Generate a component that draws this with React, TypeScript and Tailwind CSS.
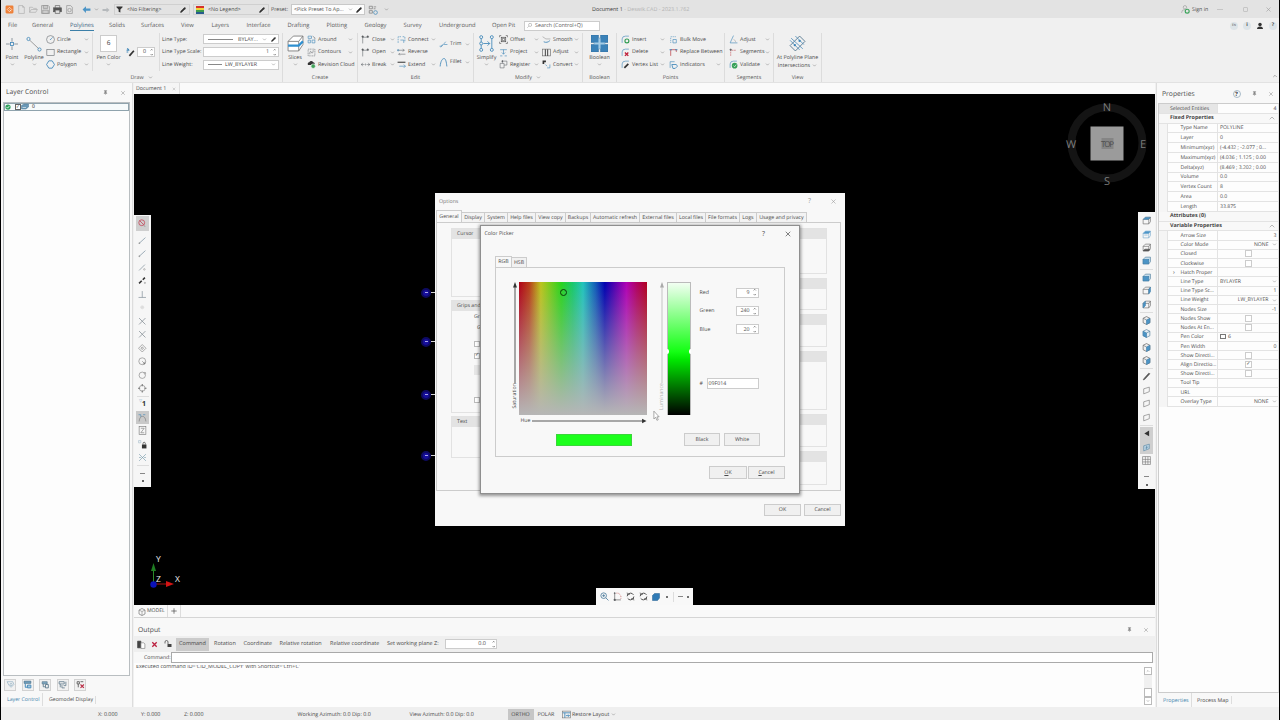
import type { ReactNode } from 'react'
import { ChevronDown, ChevronUp, Pencil, X, Pin, Plus } from 'lucide-react'

const BLUE = '#3f86b8'
const GREY = '#6b7075'

// Every small drawing lives on a 16x16 grid
const icons: Record<string, ReactNode> = {
  logo: <><rect x="1" y="1" width="14" height="14" rx="2" fill="#ee8038" stroke="none" /><path d="M8 4l4 4-4 4-4-4zM8 8l3 3" stroke="#fff" /></>,
  newFile: <><path d="M3 1h7l3 3v11H3zM10 1v3h3" stroke="#aaa" /></>,
  open: <><path d="M1 13V4h5l2 2h5v2M1 13l3-5h11l-3 5z" stroke="#aaa" /></>,
  save: <><path d="M1 1h12l2 2v12H1z" stroke="#888" /><path d="M4 1h8v5H4zM3 9h10v6H3z" fill="#ccc" stroke="#888" /></>,
  print: <><path d="M4 5V1h8v4" stroke="#555" /><rect x="1" y="5" width="14" height="7" fill="#555" stroke="#555" /><path d="M4 9h8v6H4z" fill="#ddd" stroke="#555" /></>,
  preview: <><path d="M3 1h7l3 3v11H3z" stroke="#888" /><circle cx="8" cy="9" r="3" stroke="#888" /></>,
  undo: <path d="M1 8l6-6v4h8v4H7v4z" fill="#4b94c6" stroke="none" />,
  redo: <path d="M15 8L9 3v3H1v4h8v3z" fill="#b5b9bc" stroke="none" />,
  funnel: <path d="M1 1h14v2l-5 5v7l-4-2V8L1 3z" fill="#333" stroke="none" />,
  legend: <><rect width="16" height="4" fill="#d6322c" stroke="none" /><rect y="4" width="16" height="4" fill="#f0d43a" stroke="none" /><rect y="8" width="16" height="4" fill="#3e9c4d" stroke="none" /><rect y="12" width="16" height="4" fill="#285c8e" stroke="none" /></>,
  preset: <><path d="M2 2h5v4H2zM2 9h5v4H2zM9 3h4M9 6h3" stroke="#777" /><circle cx="12" cy="12" r="3" stroke={BLUE} /></>,
  point: <><path d="M8 0v5M8 11v5M0 8h5M11 8h5" stroke="#7a8690" /><rect x="6" y="6" width="4" height="4" stroke={BLUE} /></>,
  polyline: <><path d="M3.5 4L12.5 12.5" stroke="#888" strokeWidth=".8" /><circle cx="2.5" cy="3" r="1.6" stroke={BLUE} strokeWidth=".8" /><circle cx="13.5" cy="13.5" r="1.6" stroke={BLUE} strokeWidth=".8" /></>,
  circle: <><circle cx="8" cy="8" r="7" /><path d="M8 8l4-4M7 8h2" stroke={BLUE} /></>,
  rect: <rect x="1.5" y="2.5" width="13" height="11" />,
  polygon: <path d="M5 1.5h6l4 6.5-4 6.5H5L1 8z" stroke={BLUE} strokeWidth="1.5" />,
  penWidth: <><path d="M1 4h5M1 7h3M2 1l3 2" stroke={BLUE} strokeWidth="2" /><path d="M6 14l8-9" stroke="#333" strokeWidth="3" /></>,
  slices: <><path d="M1 6l5-5h9v8l-4 6H1z" fill="#fff" stroke="#777" strokeWidth=".8" /><path d="M1 6h10v9M11 6l4-5" stroke="#777" strokeWidth=".8" /><path d="M1 10h10l4-4" stroke="#2e8fd0" strokeWidth="2" /></>,
  around: <><path d="M2 2h6v4H2zM2 9h4v5H2zM9 9h5v5H9z" stroke={BLUE} /><path d="M10 2l4 3v3" /></>,
  contours: <><path d="M2 2h12v12H2z" strokeDasharray="2 1" /><path d="M5 11c0-6 2-6 3-3s3 0 3-4" /></>,
  cloud: <><path d="M2 9a3 3 0 012-5 4 4 0 017 0 3 3 0 012 5z" fill="#333" stroke="none" /><circle cx="11" cy="11" r="4" fill="#43a35b" stroke="#fff" /></>,
  close: <><path d="M3 15V4h8" /><circle cx="3" cy="3" r="1.5" fill="#555" /><circle cx="12" cy="3" r="1.5" fill="#555" /></>,
  break: <><path d="M0 8h5M11 8h5M3 5L1 8l2 3M13 5l2 3-2 3" /><circle cx="8" cy="8" r="1" /></>,
  connect: <><path d="M2 14V3h5M10 3h4v8" strokeDasharray="3 1.5" stroke={BLUE} /><path d="M6 9h6v5" stroke={BLUE} /></>,
  reverse: <><path d="M1 4h12M10 2l3 2-3 2M3 11h12M5 9l-2 2 2 2" /><circle cx="2" cy="4" r="1.3" stroke={BLUE} /></>,
  extend: <><path d="M1 4h14" stroke="#444" strokeWidth="2" /><path d="M4 11h11M12 8l3 3-3 3" stroke={BLUE} /></>,
  trim: <path d="M1 11h4l7-8M9 8h6M3 13l3-5" stroke={BLUE} />,
  fillet: <path d="M2 15C3 5 6 1 9 1s4 6 5 14" stroke={BLUE} strokeWidth="1.5" />,
  simplify: <><path d="M3 3.500v9M13 3.500v9M5 8h6M9 6l2 2-2 2" stroke={BLUE} strokeWidth=".8" /><circle cx="3" cy="2" r="1.4" stroke={BLUE} strokeWidth=".8" /><circle cx="3" cy="8" r="1.4" fill="#f0f0f0" stroke={BLUE} strokeWidth=".8" /><circle cx="3" cy="14" r="1.4" stroke={BLUE} strokeWidth=".8" /><circle cx="13" cy="2" r="1.4" stroke={BLUE} strokeWidth=".8" /><circle cx="13" cy="14" r="1.4" stroke={BLUE} strokeWidth=".8" /></>,
  offset: <><rect x="4" y="4" width="8" height="8" stroke="#444" /><path d="M1 4V1h3M12 1h3v3M15 12v3h-3M4 15H1v-3M6 6h4v4H6z" stroke="#555" /></>,
  project: <path d="M2 3h12M8 3v8M5 8l3 3 3-3M2 14h4M10 14h4" stroke={BLUE} />,
  register: <><path d="M2 6h7v8H2zM6 6V2h8v7h-5" /><circle cx="6" cy="2" r="1" fill="#333" /></>,
  smooth: <><path d="M1 3l6 4 8 0" stroke="#999" /><path d="M3 12c4 2 8 1 11-2" stroke={BLUE} strokeWidth="1.5" /></>,
  adjustMod: <><rect x="1" y="2" width="14" height="12" stroke="#666" /><path d="M6 2v12M10 2v12" stroke="#555" strokeWidth="2" /></>,
  convert: <><path d="M1 1h6v3H4v3H1z" fill="#333" stroke="none" /><path d="M6 8l3 3M9 14h5V8" stroke={BLUE} /></>,
  boolean: <><path d="M0 0h7v3h2V0h7v7h-3v2h3v7H9v-3H7v3H0V9h3V7H0z" fill="#3b82b8" stroke="#2e6c9c" strokeWidth=".5" /><path d="M7 3h2v4h4v2H9v4H7V9H3V7h4z" fill="#a5cbe4" stroke="none" /></>,
  insert: <><path d="M2 14V7q0-5 6-5h6" stroke={BLUE} /><circle cx="10.500" cy="10.500" r="3.500" stroke="#2f9b50" strokeWidth="2" /></>,
  delete: <><path d="M2 14V7q0-5 6-5h6" stroke={BLUE} /><path d="M7 8l6 6M13 8l-6 6" stroke="#c0223c" strokeWidth="2.500" /></>,
  vertexList: <><path d="M2 14V7q0-5 6-5h6" stroke={BLUE} /><path d="M6 14l7-7" stroke="#333" strokeWidth="3" /></>,
  bulkMove: <><path d="M3 14V5M3 3h9" stroke={BLUE} strokeDasharray="2 1.500" /><path d="M7 8h6v6H7z" stroke={BLUE} /></>,
  replace: <><path d="M3 14V3h10v4" stroke="#c55a60" strokeWidth="1.500" /><path d="M1 3h4M11 3h4" stroke={BLUE} strokeWidth="2" /></>,
  indicators: <><path d="M2 14V3h8" stroke={BLUE} /><path d="M5 8h8l2 3-4 4H7z" stroke={BLUE} strokeWidth="1.500" /></>,
  angle: <><path d="M8 1L2 14h13" stroke={BLUE} /><path d="M8 8q4 1 4 5" stroke="#aaa" /></>,
  segments: <><path d="M3 14V4h9" stroke="#c55a60" strokeDasharray="3 1" /><circle cx="3" cy="3" r="1.400" fill="#555" /></>,
  validate: <><path d="M2 14V7q0-5 6-5h6" stroke={BLUE} /><circle cx="10" cy="10" r="5" fill="#36a058" stroke="none" /><path d="M8 10l2 2 3-4" stroke="#fff" /></>,
  intersect: <><path d="M1 10l9-9 5 5-9 9z" stroke="#4c6f88" strokeWidth=".8" /><path d="M2 3l11 10M1 5l9 9M6 1l8 8" stroke={BLUE} strokeWidth=".7" /><circle cx="5.500" cy="9.500" r="1.100" fill={BLUE} stroke="none" /><circle cx="10" cy="5.500" r="1.100" fill={BLUE} stroke="none" /></>,
  user: <><circle cx="7" cy="4" r="3" stroke="#999" /><path d="M1 14q0-6 6-6" stroke="#999" /><circle cx="11" cy="11" r="3.500" stroke="#3aa35a" strokeWidth="2" /></>,
  person: <><circle cx="8" cy="5" r="3.500" fill="#333" stroke="none" /><path d="M2 14q0-5 6-5t6 5z" fill="#333" stroke="none" /></>,
  cubeTop: <><path d="M2 6l4-4h9l-3 4z" fill="#4b94c6" stroke="#3d6a8a" /><path d="M2 6v8h10V6M12 14l3-4V2" stroke="#666" /></>,
  cubeFlat: <><path d="M2 6l4-4h9l-3 4z" fill="#4b94c6" stroke="#5a9ccc" /><path d="M2 6v8h10V6M12 14l3-4V2M4 9h6" stroke="#76a9cc" /></>,
  cubeBottom: <><path d="M2 6l4-4h9l-3 4zM2 6v8h10V6M12 14l3-4V2" stroke="#666" /><path d="M2 14l3-3h9l-2 3z" fill="#555" stroke="#555" /></>,
  cubeFront: <><path d="M2 6l4-4h9v8l-3 4H2z" stroke="#4b7897" fill="#c5ddec" /><rect x="2" y="6" width="10" height="8" fill="#4b94c6" stroke="#3f7fab" /></>,
  cubeSide: <><path d="M2 6l4-4h9l-3 4zM2 6v8h10V6" stroke="#666" /><path d="M12 6l3-4v8l-3 4z" fill="#4b94c6" stroke="#3f7fab" /></>,
  cubeLeft: <><path d="M2 6l4-4h9v8l-3 4H2zM12 6v8M2 6h10l3-4" stroke="#666" /><path d="M2 6l4-4v8l-4 4z" fill="#4b94c6" stroke="#3f7fab" /></>,
  cubeIso: <><path d="M8 1l6 3v8l-6 3-6-3V4z" stroke="#4b7897" fill="#e6eef3" /><path d="M2 4l6 3v8l-6-3z" fill="#4b94c6" stroke="#3f7fab" /><path d="M8 7l6-3" stroke="#4b7897" /></>,
  cubeIso2: <><path d="M8 1l6 3v8l-6 3-6-3V4z" stroke="#555" fill="#eee" /><path d="M8 7l6-3v8l-6 3z" fill="#4b94c6" stroke="#3f7fab" /><path d="M2 4l6 3" /></>,
  brush: <path d="M2 14l3-1 9-10-2-1-8 9z" fill="#555" stroke="#555" />,
  plane: <path d="M3 5l10-3v8L3 14z" stroke="#777" />,
  arrowLeft: <path d="M14 1v13L3 8z" fill="#333" stroke="none" />,
  planeBlue: <><path d="M3 5l10-3v8L3 14z" fill="#b9d3e4" stroke="#5a86a3" /><path d="M6 9l5-2M8 5v6" stroke="#5a86a3" /></>,
  grid: <path d="M1 1h14v14H1zM6 1v14M10.500 1v14M1 6h14M1 10.500h14" stroke="#777" />,
  none: <><circle cx="7" cy="7" r="5.500" stroke="#c4485a" strokeWidth="1.500" /><path d="M3 3l8 8" stroke="#c4485a" strokeWidth="1.500" /><path d="M12 11v3h2" stroke="#999" /></>,
  seg: <><path d="M2 14L14 3" stroke="#7f95a3" strokeWidth="1.400" /><circle cx="2.500" cy="13.500" r="1" fill="#999" stroke="#999" /></>,
  seg2: <><path d="M2 14L13 3" stroke="#8495a0" strokeWidth="1.400" /><circle cx="12" cy="12" r="1.500" stroke="#999" /></>,
  segBold: <><path d="M2 14l5-5M9 7l4-4" stroke="#333" strokeWidth="3" /><circle cx="13" cy="13" r="1.200" stroke="#888" /></>,
  perp: <path d="M1 14h14M8 2v12" stroke="#8a969e" strokeWidth="1.400" />,
  dotGrey: <circle cx="8" cy="8" r="3" fill="#ddd" stroke="#ddd" />,
  cross: <path d="M2 2l12 12M14 2L2 14" stroke="#828b92" strokeWidth="1.400" />,
  diamond: <><path d="M8 1l7 7-7 7-7-7z" stroke="#777" /><circle cx="8" cy="8" r="2" stroke="#777" /></>,
  tangent: <><circle cx="8" cy="8" r="6.500" stroke="#777" /><path d="M8 8l5 5M13 9v4H9" stroke="#666" /></>,
  ring: <><circle cx="8" cy="8" r="6" stroke="#777" /><circle cx="13" cy="4" r="1.500" fill="#fff" stroke="#777" /></>,
  ringTicks: <><circle cx="8" cy="8" r="5.500" stroke="#777" /><path d="M8 0v4M8 12v4M0 8h4M12 8h4" stroke="#777" strokeWidth="2" /></>,
  arcNode: <><path d="M2 15q1-9 6-9t6 9" stroke="#777" /><path d="M1 3h4v4M9 3h4" stroke={BLUE} /></>,
  zBox: <><rect x="2" y="1" width="12" height="14" stroke="#777" /><path d="M5 4h6l-6 8h6" stroke="#777" /></>,
  lock: <><path d="M1 1h4v4H1z" stroke="#a5bccb" /><rect x="7" y="8" width="8" height="7" fill="#333" stroke="none" /><path d="M9 8V6a2 2 0 014 0v2" stroke="#333" /></>,
  cutCross: <path d="M2 2l12 12M14 2L2 14M2 8h3M11 8h3" stroke="#6e93a6" />,
  zoom: <><circle cx="6.500" cy="6.500" r="5" stroke="#4d7c9c" strokeWidth="1.500" /><path d="M10.500 10.500L15 15M4 6.500h5M6.500 4v5" stroke="#4d7c9c" strokeWidth="1.500" /></>,
  zoomBox: <><path d="M3 14V2M3 14h11" stroke="#555" /><path d="M6 2h4l4 5v5" strokeDasharray="2 1.500" stroke="#c05050" /><circle cx="3" cy="14" r="1.500" fill="#444" /><circle cx="3" cy="2" r="1" fill="#444" /></>,
  orbit: <><circle cx="8" cy="8" r="6" stroke="#444" strokeWidth="1.600" strokeDasharray="15 3.800" /><path d="M2 1l1 4 4-1M14 15l-1-4-4 1" stroke="#444" /></>,
  solidCube: <path d="M1 5l4-4h10v9l-4 5H1z" fill="#2f7ab5" stroke="#2a6594" />,
  paste: <><path d="M1 2h6v12H1z" fill="#444" stroke="#444" /><path d="M7 5h5l2 2v8H7z" fill="#fff" stroke="#777" /></>,
  clear: <path d="M3 3l10 10M13 3L3 13" stroke="#bb1f3f" strokeWidth="3" />,
  unlock: <><rect x="7" y="8" width="8" height="6" fill="#444" stroke="none" /><path d="M2 7V4a3 3 0 016 0v4" stroke="#444" strokeWidth="1.500" /></>,
  restore: <><rect x="1" y="2" width="14" height="12" stroke="#777" /><path d="M1 5h14M5 5v9" stroke={BLUE} strokeWidth="1.500" /><path d="M7 10h6M11 8l2 2-2 2" stroke={BLUE} strokeWidth="1.500" /></>,
  check: <><circle cx="8" cy="8" r="7" fill="#2fa15c" stroke="none" /><path d="M4 8l3 3 5-6" stroke="#fff" strokeWidth="2" /></>,
  layer: <><path d="M1 5l5-3h9v6l-5 4H1z" fill="#6a98b6" stroke="#4f7d9b" /><path d="M3 9h7" stroke="#fff" /></>,
  layerTool: <><path d="M2 2h12v4H2z" fill="#6f9fbe" stroke="#486c84" /><path d="M4 6v7h3M8 9h6v5H8z" fill="#a5c8de" stroke={BLUE} strokeWidth="1.500" /></>,
  layerDel: <><path d="M2 3h4v4H2zM8 3h5M4 7v6" stroke="#555" strokeWidth="1.500" /><path d="M8 8l6 6M14 8l-6 6" stroke="#bb3048" strokeWidth="2" /></>,
  layerWire: <><path d="M2 3h10l2 5-5 5-4-4z" stroke="#86a9be" /><circle cx="9" cy="8" r="2" stroke="#86a9be" /></>,
  layerCopy: <><path d="M2 3h9v4H2z" fill="#7fa9c3" stroke="#55758a" /><path d="M4 7v5h3M8 8h5v6H8z" stroke="#55758a" strokeWidth="1.500" /></>,
  layerNode: <><path d="M2 3h9v4H2zM4 7v6" stroke="#667f8f" strokeWidth="1.500" /><path d="M7 9v5h5M14 3v7h-4" stroke="#667f8f" strokeWidth="1.500" /></>,
  model: <><path d="M8 1l6 3v8l-6 3-6-3V4z" stroke="#555" /><path d="M2 4l6 3 6-3M8 7v8" stroke="#777" /></>,
}

function Icon({ name, className = 'size-[9px]' }: { name: string; className?: string }) {
  return (
    <svg viewBox="0 0 16 16" fill="none" stroke={GREY} strokeWidth="1.1" className={`shrink-0 ${className}`}>
      {icons[name]}
    </svg>
  )
}

function Chev({ className = '' }: { className?: string }) {
  return <ChevronDown className={`size-[5px] shrink-0 text-[#666] ${className}`} />
}

function Spin() {
  return (
    <span className="flex w-[5px] shrink-0 flex-col items-center justify-center gap-[1.500px]">
      <ChevronUp className="size-[3.500px] text-[#444]" strokeWidth={4} />
      <ChevronDown className="size-[3.500px] text-[#444]" strokeWidth={4} />
    </span>
  )
}

/* ---------- Title bar ---------- */

function TitleBar() {
  return (
    <div className="flex h-[18px] shrink-0 items-center bg-[#e3e3e3] pt-px text-[5.300px] whitespace-nowrap text-[#4a4a4a]">
      <div className="flex w-[79px] items-center gap-[3px] pl-[4px]">
        <Icon name="logo" />
        <Icon name="newFile" />
        <Icon name="open" />
        <Icon name="save" />
        <Icon name="print" />
        <Icon name="preview" />
      </div>
      <div className="flex w-[34px] items-center pl-[2px]">
        <Icon name="undo" />
        <Chev className="mx-[3px]" />
        <Icon name="redo" className="size-[8px]" />
      </div>
      <div className="flex h-[11px] w-[76px] items-center border border-[#d0d0d0] px-[1px]">
        <Icon name="funnel" className="size-[7px]" />
        <span className="ml-[4px] flex-1">&lt;No Filtering&gt;</span>
        <Pencil className="mr-[2px] size-[6px] fill-[#333] text-[#333]" />
      </div>
      <div className="ml-[3px] flex h-[11px] w-[76px] items-center border border-[#d0d0d0] px-[2px]">
        <Icon name="legend" className="size-[8px]" />
        <span className="ml-[4px] flex-1">&lt;No Legend&gt;</span>
        <Pencil className="mr-[1px] size-[6px] fill-[#333] text-[#333]" />
      </div>
      <span className="ml-[2px] w-[20px]">Preset:</span>
      <div className="flex h-[11px] w-[74px] items-center border border-[#c8c8c8] bg-[#fcfcfc] px-[2px]">
        <span className="flex-1">&lt;Pick Preset To Ap...</span>
        <Chev />
        <Pencil className="ml-[3px] size-[6px] fill-[#333] text-[#333]" />
      </div>
      <Icon name="preset" className="ml-[3px] size-[10px]" />
      <Chev className="ml-[6px]" />
      <div className="ml-[203px] text-[5.400px] whitespace-pre text-[#3a3a3a]">
        Document 1 <span className="text-[#b4b4b4]">- Deswik.CAD - 2023.1.762</span>
      </div>
      <div className="ml-auto flex items-center text-[5.300px]">
        <Icon name="user" />
        <span className="ml-[2px] w-[25px]">Sign in</span>
        <span className="h-px w-[6px] bg-[#c5c5c5]" />
        <span className="ml-[20px] size-[5px] rounded-[1px] border border-[#c5c5c5]" />
        <X className="mr-[7px] ml-[17px] size-[7px] text-[#999]" />
      </div>
    </div>
  )
}

/* ---------- Ribbon ---------- */

function RibbonTabs() {
  return (
    <div className="flex h-[15px] shrink-0 items-center pt-px text-[5.800px] whitespace-nowrap text-[#5a5a5a]">
      <span className="w-[31px] pl-[7px]">File</span>
      <span className="w-[38px]">General</span>
      <span className="w-[39px]">
        <span className="border-b border-[#3b7fa8] pb-px text-[#3c6480]">Polylines</span>
      </span>
      <span className="w-[32px]">Solids</span>
      <span className="w-[40px]">Surfaces</span>
      <span className="w-[30.500px]">View</span>
      <span className="w-[35px]">Layers</span>
      <span className="w-[41px]">Interface</span>
      <span className="w-[39px]">Drafting</span>
      <span className="w-[38px]">Plotting</span>
      <span className="w-[39px]">Geology</span>
      <span className="w-[35.500px]">Survey</span>
      <span className="w-[53px]">Underground</span>
      <span className="w-[32px]">Open Pit</span>
      <span className="-mt-px flex h-[10px] w-[76px] items-center border border-[#ccc] bg-white pl-[2px] text-[5.400px]">
        <svg viewBox="0 0 16 16" fill="none" stroke="#888" strokeWidth="1.500" className="mr-[3px] size-[5px]">
          <circle cx="10" cy="6" r="5" />
          <path d="M6 10l-5 5" />
        </svg>
        Search (Control+Q)
      </span>
      <span className="-mt-px mr-[2px] ml-auto flex items-center gap-[5px] text-[5px] text-[#444]">
        <span className="flex size-[8px] items-center justify-center rounded-full bg-[#dde4e8] text-[3px]">EN</span>
        <span className="flex size-[8px] items-center justify-center rounded-full bg-[#dde4e8] font-bold">i</span>
        <Icon name="person" className="size-[8px]" />
        <span className="flex size-[8px] items-center justify-center rounded-full bg-[#dde4e8] font-bold">?</span>
      </span>
    </div>
  )
}

function Group({ label, more, className, children }: { label: string; more?: boolean; className: string; children: ReactNode }) {
  return (
    <div className={`flex shrink-0 flex-col border-r border-[#dcdcdc] ${className}`}>
      <div className="flex h-[38px]">{children}</div>
      <div className="flex h-[11px] items-center justify-center gap-[4px] pt-[2px] text-[#5a5a5a]">
        {label}
        {more && <Chev />}
      </div>
    </div>
  )
}

function Big({ icon, label, className, size = 'size-[14px]' }: { icon: string; label: string; className: string; size?: string }) {
  return (
    <div className={`flex shrink-0 flex-col items-center ${className}`}>
      <span className="flex h-[21px] items-center">
        <Icon name={icon} className={size} />
      </span>
      <span className="flex h-[8px] items-center whitespace-nowrap">{label}</span>
      <Chev />
    </div>
  )
}

function Stack({ items, className }: { items: [string, string, boolean?][]; className: string }) {
  return (
    <div className={`flex shrink-0 flex-col ${className}`}>
      {items.map(([icon, label, chev]) => (
        <div key={label} className="flex flex-1 items-center">
          <Icon name={icon} />
          <span className="ml-[2px] flex-1 whitespace-nowrap">{label}</span>
          {chev && <Chev />}
        </div>
      ))}
    </div>
  )
}

function Ribbon() {
  return (
    <div className="flex h-[50px] shrink-0 border-b border-[#e2e2e2] text-[5.350px] text-[#4a4a4a]">
      <Group label="Draw" more className="w-[282px]">
        <Big icon="point" label="Point" className="w-[22px]" size="size-[12px]" />
        <Big icon="polyline" label="Polyline" className="w-[22px]" size="size-[16px]" />
        <Stack
          className="w-[48px] border-r border-[#dcdcdc] pr-[3px] pl-px"
          items={[['circle', 'Circle', true], ['rect', 'Rectangle', true], ['polygon', 'Polygon', true]]}
        />
        <div className="flex w-[31px] flex-col items-center">
          <span className="mt-[2px] flex h-[17px] w-[17px] items-center justify-center border border-[#ccc] bg-white text-[6.500px] text-[#333]">6</span>
          <span className="mt-[2px] flex h-[8px] items-center">Pen Color</span>
          <Chev />
        </div>
        <div className="flex w-[36px] items-center border-r border-[#dcdcdc]">
          <Icon name="penWidth" className="ml-[2px] size-[9px]" />
          <span className="ml-[2px] flex h-[10px] w-[18px] shrink-0 items-center justify-end border border-[#ccc] bg-white">
            <span className="mr-[3px]">0</span>
            <Spin />
          </span>
        </div>
        <div className="grid w-[43px] grid-rows-3 items-center pl-[2px] whitespace-nowrap">
          <span>Line Type:</span>
          <span>Line Type Scale:</span>
          <span>Line Weight:</span>
        </div>
        <div className="grid w-[76px] grid-rows-3 items-center">
          <span className="flex h-[10px] items-center border border-[#ccc] bg-white px-[2px]">
            <span className="ml-[2px] h-px w-[25px] bg-[#888]" />
            <span className="ml-[5px] flex-1">BYLAY...</span>
            <Chev />
            <Pencil className="ml-[4px] size-[5px] fill-[#333] text-[#333]" />
          </span>
          <span className="flex h-[10px] items-center justify-end border border-[#ccc] bg-white pr-[1px]">
            <span className="mr-[3px]">1</span>
            <Spin />
          </span>
          <span className="flex h-[10px] items-center border border-[#ccc] bg-white px-[2px]">
            <span className="ml-[2px] h-px w-[14px] bg-[#888]" />
            <span className="ml-[3px] flex-1">LW_BYLAYER</span>
            <Chev />
          </span>
        </div>
      </Group>
      <Group label="Create" className="w-[75px]">
        <Big icon="slices" label="Slices" className="w-[24px]" size="size-[17px]" />
        <Stack className="w-[46px]" items={[['around', 'Around', true], ['contours', 'Contours', true], ['cloud', 'Revision Cloud']]} />
      </Group>
      <Group label="Edit" className="w-[116px]">
        <Stack className="ml-[3px] w-[34px]" items={[['close', 'Close', true], ['close', 'Open', true], ['break', 'Break', true]]} />
        <Stack className="ml-[2px] w-[39px]" items={[['connect', 'Connect', true], ['reverse', 'Reverse'], ['extend', 'Extend', true]]} />
        <Stack className="ml-[3px] w-[31px] pt-[2px]" items={[['trim', 'Trim', true], ['fillet', 'Fillet', true]]} />
      </Group>
      <Group label="Modify" more className="w-[109px]">
        <Big icon="simplify" label="Simplify" className="w-[25px]" size="size-[17px]" />
        <Stack className="w-[40px]" items={[['offset', 'Offset', true], ['project', 'Project', true], ['register', 'Register', true]]} />
        <Stack className="ml-[3px] w-[37px]" items={[['smooth', 'Smooth', true], ['adjustMod', 'Adjust', true], ['convert', 'Convert', true]]} />
      </Group>
      <Group label="Boolean" className="w-[34px]">
        <Big icon="boolean" label="Boolean" className="w-[33px]" size="size-[17px]" />
      </Group>
      <Group label="Points" className="w-[108px]">
        <Stack className="ml-[4px] w-[44px]" items={[['insert', 'Insert', true], ['delete', 'Delete', true], ['vertexList', 'Vertex List', true]]} />
        <Stack className="ml-[4px] w-[52px]" items={[['bulkMove', 'Bulk Move'], ['replace', 'Replace Between'], ['indicators', 'Indicators', true]]} />
      </Group>
      <Group label="Segments" className="w-[49px]">
        <Stack className="ml-[4px] w-[41px]" items={[['angle', 'Adjust', true], ['segments', 'Segments', true], ['validate', 'Validate', true]]} />
      </Group>
      <Group label="View" className="w-[48px]">
        <div className="flex w-[47px] flex-col items-center whitespace-nowrap">
          <span className="flex h-[21px] items-center">
            <Icon name="intersect" className="size-[17px]" />
          </span>
          <span className="flex h-[8px] items-center">At Polyline Plane</span>
          <span className="flex h-[7px] items-center gap-[2px]">
            Intersections <Chev />
          </span>
        </div>
      </Group>
      <ChevronUp className="mt-auto mr-[1px] mb-[3px] ml-auto size-[6px] text-[#666]" />
    </div>
  )
}

/* ---------- Left dock ---------- */

function LayerDock() {
  return (
    <div className="flex w-[132px] shrink-0 flex-col border-r border-[#ddd] bg-[#f8f8f8]">
      <div className="flex h-[19px] shrink-0 items-center pr-[6.500px] pl-[5px] text-[6.750px] text-[#4a4a4a]">
        <span className="flex-1">Layer Control</span>
        <Pin className="mr-[11.500px] size-[5px] fill-[#888] text-[#888]" />
        <X className="size-[6px] text-[#888]" />
      </div>
      <div className="mr-[2px] ml-[2px] h-[574px] shrink-0 border border-[#b9bec1] bg-[#fdfdfd]">
        <div className="flex h-[8px] items-center border border-[#8fa3ad] bg-[#f6fafb] text-[5px]">
          <Icon name="check" className="size-[6px]" />
          <span className="ml-[4px] flex size-[6px] items-center justify-center border border-[#666] bg-white text-[4.500px]">✓</span>
          <Icon name="layer" className="size-[8px]" />
          <span className="ml-[3px] text-[#222]">0</span>
        </div>
      </div>
      <div className="flex h-[17px] shrink-0 items-center gap-[5.500px] pl-[3px]">
        {['layerWire', 'layerTool', 'layerCopy', 'layerNode', 'layerDel'].map((name) => (
          <span key={name} className="flex h-[12px] w-[12px] items-center justify-center border border-[#d2d2d2] bg-[#f1f1f1]">
            <Icon name={name} />
          </span>
        ))}
      </div>
      <div className="flex h-[13px] items-center text-[5.200px] whitespace-nowrap text-[#4a4a4a]">
        <span className="flex h-full w-[42px] items-center border-r border-[#ddd] pt-px pl-[6px] text-[#4384ad]">Layer Control</span>
        <span className="flex h-[8px] w-[53px] items-center border-r border-[#ddd] pt-px pl-[6px]">Geomodel Display</span>
      </div>
    </div>
  )
}

/* ---------- Canvas ---------- */

const snapTools: [string, string][] = [
  ['none', 'h-[15px] bg-[#cfcfcf]'],
  ['seg', 'h-[15.500px] pt-[2px]'],
  ['seg', 'h-[13.500px]'],
  ['seg2', 'h-[13.500px]'],
  ['segBold', 'h-[13.500px]'],
  ['perp', 'h-[13.500px]'],
  ['dotGrey', 'h-[13.500px]'],
  ['cross', 'h-[13.500px]'],
  ['cross', 'h-[13.500px]'],
  ['diamond', 'h-[13.500px]'],
  ['tangent', 'h-[13.500px]'],
  ['ring', 'h-[13.500px]'],
  ['ringTicks', 'h-[13.500px]'],
]

function SnapToolbar() {
  return (
    <div className="absolute top-[121px] left-0 flex h-[272px] w-[17px] flex-col items-center bg-[#f6f6f6] pt-px">
      {snapTools.map(([name, cls], i) => (
        <span key={i} className={`flex w-[13px] shrink-0 items-center justify-center ${cls}`}>
          <Icon name={name} className="size-[8.500px]" />
        </span>
      ))}
      <span className="mt-px flex h-[15px] w-[12px] shrink-0 items-center justify-center border-t border-[#ddd] text-[7px] font-bold text-[#333]">
        <span className="-mt-[5px] text-[4px] font-normal text-[#6fa3c4]">▽</span>1
      </span>
      <span className="flex h-[13px] w-[13px] shrink-0 items-center justify-center bg-[#c9c9c9]"><Icon name="arcNode" /></span>
      <span className="flex h-[13.500px] shrink-0 items-center"><Icon name="zBox" /></span>
      <span className="flex h-[13px] shrink-0 items-center"><Icon name="lock" /></span>
      <span className="flex h-[13.500px] shrink-0 items-center"><Icon name="cutCross" /></span>
      <span className="mt-px h-[8px] w-[12px] shrink-0 border-t border-[#ddd]" />
      <span className="h-px w-[5px] shrink-0 bg-[#888]" />
      <span className="mt-[6px] size-[2px] shrink-0 rounded-full bg-[#333]" />
    </div>
  )
}

function ViewToolbar() {
  const groups = [
    ['cubeTop', 'cubeFlat', 'cubeBottom', 'cubeFront'],
    ['cubeFront', 'cubeSide', 'cubeLeft'],
    ['cubeIso2', 'cubeIso', 'cubeIso2', 'cubeIso2'],
    ['brush', 'plane', 'plane', 'plane'],
  ]
  return (
    <div className="absolute top-[118px] right-0 flex h-[277px] w-[17px] flex-col items-center bg-[#f6f6f6] pt-[2px]">
      {groups.map((names, g) => (
        <div key={g} className="mb-px flex w-[13px] shrink-0 flex-col items-center border-b border-[#ddd] pb-px">
          {names.map((name, i) => (
            <span key={i} className="flex h-[13.400px] items-center">
              <Icon name={name} />
            </span>
          ))}
        </div>
      ))}
      <span className="flex h-[13.500px] w-[13px] shrink-0 items-center justify-center bg-[#cfcfcf]"><Icon name="arrowLeft" className="size-[7px]" /></span>
      <span className="flex h-[13.500px] w-[13px] shrink-0 items-center justify-center bg-[#cfcfcf]"><Icon name="planeBlue" /></span>
      <span className="flex h-[14px] shrink-0 items-center"><Icon name="grid" /></span>
      <span className="mt-[8px] h-px w-[5px] shrink-0 bg-[#888]" />
      <span className="mt-[7px] size-[2px] shrink-0 rounded-full bg-[#333]" />
    </div>
  )
}

function NavToolbar() {
  return (
    <div className="absolute bottom-0 left-[462px] flex h-[17px] w-[97px] items-center bg-[#f8f8f8] pl-[3.500px]">
      <div className="flex items-center gap-[4px]">
        <Icon name="zoom" />
        <Icon name="zoomBox" />
        <Icon name="orbit" />
        <Icon name="orbit" />
        <Icon name="solidCube" className="size-[8px]" />
      </div>
      <span className="ml-[6px] size-[2px] rounded-full bg-[#444]" />
      <span className="ml-[5px] h-[10px] w-px bg-[#ddd]" />
      <span className="ml-[4px] h-px w-[5px] bg-[#888]" />
      <span className="ml-[4px] size-[2px] rounded-full bg-[#444]" />
    </div>
  )
}

function Compass() {
  return (
    <div className="absolute top-[4px] right-[3px] size-[90px]">
      <svg viewBox="0 0 90 90" className="size-full" fontFamily="Open Sans, sans-serif" fontSize="11" fill="#7d7d7d" textAnchor="middle">
        <circle cx="45" cy="45" r="35.500" fill="none" stroke="#141414" strokeWidth="8" />
        <rect x="28.500" y="28.500" width="33" height="34" fill="#9b9b9b" />
        <rect x="39.500" y="40" width="12" height="11" fill="#858585" />
        <text x="45.500" y="49" fontSize="8" fill="#4c4c4c" textLength="13">TOP</text>
        <text x="45" y="13">N</text>
        <text x="81" y="50">E</text>
        <text x="45" y="87">S</text>
        <text x="9" y="50">W</text>
      </svg>
    </div>
  )
}

function Axes() {
  return (
    <svg viewBox="0 0 40 40" className="absolute bottom-[13px] left-[11px] size-[40px]" fontFamily="Open Sans, sans-serif" fontSize="8.500" fill="#eee">
      <path d="M8.500 32V16" stroke="#2a8a2a" />
      <path d="M6 19l2.500-8L11 19z" fill="#1f7d22" />
      <path d="M9 32h13" stroke="#a11" />
      <path d="M21 29l8 3-8 3z" fill="#d41414" />
      <circle cx="8.500" cy="32.500" r="3.200" fill="#0a12b8" />
      <text x="11" y="10">Y</text>
      <text x="11" y="30">Z</text>
      <text x="30" y="30">X</text>
    </svg>
  )
}

const vertexMarks = ['top-[193px]', 'top-[242px]', 'top-[295px]', 'top-[356px]']

function Canvas() {
  return (
    <div className="relative h-[511px] shrink-0 bg-black">
      {vertexMarks.map((top) => (
        <div key={top} className={`absolute left-[287px] flex h-[11px] items-center ${top}`}>
          <span className="flex size-[10px] items-center justify-center rounded-full border-2 border-[#0d0a60] bg-[#170f9c]">
            <span className="h-px w-[3px] bg-[#a9a8e8]" />
          </span>
          <span className="h-px w-[5px] bg-[#d5d5d5]" />
        </div>
      ))}
      <Compass />
      <Axes />
      <SnapToolbar />
      <ViewToolbar />
      <NavToolbar />
      <OptionsDialog />
      <ColorPicker />
    </div>
  )
}

/* ---------- Dialogs ---------- */

const optionTabs: [string, string][] = [
  ['Display', 'w-[23px]'],
  ['System', 'w-[23px]'],
  ['Help files', 'w-[28px]'],
  ['View copy', 'w-[30px]'],
  ['Backups', 'w-[25px]'],
  ['Automatic refresh', 'w-[49px]'],
  ['External files', 'w-[37px]'],
  ['Local files', 'w-[29px]'],
  ['File formats', 'w-[34px]'],
  ['Logs', 'w-[17px]'],
  ['Usage and privacy', 'w-[50px]'],
]

function Section({ title, className, children }: { title?: string; className: string; children?: ReactNode }) {
  return (
    <div className={`shrink-0 border border-[#e2e2e2] ${className}`}>
      <div className="flex h-[10px] items-center bg-[#e3e3e3] pl-[5px]">{title}</div>
      {children}
    </div>
  )
}

function OptionsDialog() {
  return (
    <div className="absolute top-[99px] left-[301px] flex h-[333px] w-[410px] flex-col bg-[#f8f8f8] text-[5.250px] text-[#4a4a4a]">
      <div className="flex h-[17px] shrink-0 items-center pr-[8px] pl-[4px] text-[#777]">
        <span className="flex-1">Options</span>
        <span className="mr-[19px] text-[7px] text-[#999]">?</span>
        <X className="size-[7px] text-[#999]" />
      </div>
      <div className="ml-[1px] flex h-[12px] shrink-0 items-end whitespace-nowrap">
        <span className="flex h-[12px] w-[26px] items-center justify-center border border-b-0 border-[#ccc]">General</span>
        {optionTabs.map(([label, w]) => (
          <span key={label} className={`flex h-[10px] items-center justify-center border-t border-r border-[#ccc] bg-[#f3f3f3] ${w}`}>
            {label}
          </span>
        ))}
      </div>
      <div className="mr-[4px] ml-[1px] flex h-[269px] shrink-0 justify-between border border-[#ccc] pt-[5px] pr-[13px] pl-[14px]">
        <div className="flex w-[180px] flex-col gap-[3px]">
          <Section title="Cursor" className="h-[69px]" />
          <Section title="Grips and selection" className="h-[113px]">
            <div className="flex flex-col items-start pl-[22px]">
              <span className="mt-[3px]">Grip size</span>
              <span className="mt-[6px] ml-[3px]">Grip color</span>
              <span className="mt-[10px] size-[6px] border border-[#bbb] bg-white" />
              <span className="mt-[6px] flex size-[6px] items-center justify-center border border-[#bbb] bg-white text-[5px]">✓</span>
              <span className="mt-[6px] h-[10px] w-[20px] bg-[#e6e6e6]" />
              <span className="mt-[22px] size-[6px] border border-[#bbb] bg-white" />
            </div>
          </Section>
          <Section title="Text" className="h-[42px]" />
        </div>
        <div className="flex w-[180px] flex-col gap-[4px]">
          <Section className="h-[46px]" />
          <Section className="h-[32px]" />
          <Section className="h-[33px]" />
          <Section className="h-[59px]" />
          <Section className="h-[33px]" />
          <Section className="h-[34px]" />
        </div>
      </div>
      <div className="mt-[13px] mr-[4px] flex justify-end gap-[3px]">
        <span className="flex h-[12px] w-[37px] items-center justify-center border border-[#ccc] bg-[#f0f0f0]">OK</span>
        <span className="flex h-[12px] w-[37px] items-center justify-center border border-[#ccc] bg-[#f0f0f0]">Cancel</span>
      </div>
    </div>
  )
}

function Channel({ label, value }: { label: string; value: number }) {
  return (
    <div className="flex h-[18.400px] items-center">
      <span className="w-[36px]">{label}</span>
      <span className="flex h-[10px] w-[23px] items-center justify-end border border-[#ccc] bg-white">
        <span className="mr-[3px]">{value}</span>
        <Spin />
      </span>
    </div>
  )
}

function ColorPicker() {
  return (
    <div className="absolute top-[131px] left-[346px] flex h-[269px] w-[320px] flex-col border border-[#8f8f8f] bg-[#f8f8f8] text-[5.250px] text-[#4a4a4a] shadow-[0_1px_3px_1px_rgba(0,0,0,0.4)]">
      <div className="flex h-[16px] shrink-0 items-center pr-[7px] pl-[3.500px]">
        <span className="flex-1">Color Picker</span>
        <span className="mr-[19px] text-[7px]">?</span>
        <X className="size-[8px] text-[#444]" />
      </div>
      <div className="mt-[14px] ml-[14px] flex h-[11px] items-end">
        <span className="flex h-[11px] w-[17px] items-center justify-center border border-b-0 border-[#ccc]">RGB</span>
        <span className="flex h-[10px] w-[15px] items-center justify-center border border-b-0 border-l-0 border-[#ccc] bg-[#f1f1f1]">HSB</span>
      </div>
      <div className="mr-[14px] ml-[14px] flex h-[190px] shrink-0 flex-col border border-[#ccc]">
        <div className="mt-[14px] flex h-[133px]">
          <div className="ml-[14.500px] flex w-[8px] flex-col items-center">
            <svg viewBox="0 0 8 101" className="h-[101px] w-[8px] shrink-0">
              <path d="M4 3v98" stroke="#555" />
              <path d="M2 5.500L4 0l2 5.500z" fill="#333" />
            </svg>
            <span className="rotate-180 [writing-mode:vertical-rl]">Saturation</span>
          </div>
          <div className="relative ml-[.5px] h-[133px] w-[128px] bg-[linear-gradient(to_right,#b00018,#b83c18_8%,#bcc41c_17%,#28d41c_33%,#18c86c_42%,#20c4bc_50%,#1058b8_60%,#0000b0_67%,#6000b0_76%,#b000b4_84%,#b00060_92%,#b00020)]">
            <div className="h-full w-full bg-linear-to-b from-[#b6b6b600] to-[#b6b6b6]" />
            <span className="absolute top-[7px] left-[40.500px] size-[7px] rounded-full border border-[#0b3a0b]" />
          </div>
          <div className="ml-[11px] flex w-[8px] flex-col items-center text-[#b0b0b0]">
            <svg viewBox="0 0 8 101" className="h-[101px] w-[8px] shrink-0">
              <path d="M4 3v98" stroke="#c4c4c4" />
              <path d="M2 5.500L4 0l2 5.500z" fill="#aaa" />
            </svg>
            <span className="rotate-180 [writing-mode:vertical-rl]">Luminance</span>
          </div>
          <div className="relative ml-[1px] w-[24px] border-x border-t border-[#bbb] bg-[linear-gradient(to_bottom,#f2fff2,#14ff14_52%,#00e800_58%,#000)]">
            <span className="absolute top-[66px] left-[-1px] h-[5px] w-[2px] rounded-r bg-white" />
            <span className="absolute top-[66px] right-[-1px] h-[5px] w-[2px] rounded-l bg-white" />
          </div>
          <div className="ml-[8.500px] w-[60px] pt-[1.500px]">
            <Channel label="Red" value={9} />
            <Channel label="Green" value={240} />
            <Channel label="Blue" value={20} />
            <div className="mt-[39.500px] flex items-center">
              <span className="w-[7px]">#</span>
              <span className="flex h-[11px] w-[52px] items-center border border-[#ccc] bg-white pl-px">09F014</span>
            </div>
          </div>
        </div>
        <div className="ml-[24.500px] flex h-[11px] w-[128px] items-center gap-[1px]">
          Hue
          <svg viewBox="0 0 116 6" className="h-[6px] w-[115px] shrink-0">
            <path d="M0 3h112" stroke="#555" />
            <path d="M111 .8l4.500 2.200-4.500 2.200z" fill="#333" />
          </svg>
        </div>
        <div className="mt-[7px] flex items-center">
          <span className="ml-[60px] h-[12px] w-[76px] border border-[#3bd53b] bg-[#1cff1c]" />
          <span className="ml-[52px] flex h-[13px] w-[36px] items-center justify-center border border-[#ccc] bg-[#f0f0f0]">Black</span>
          <span className="ml-[4px] flex h-[13px] w-[36px] items-center justify-center border border-[#ccc] bg-[#f0f0f0]">White</span>
        </div>
      </div>
      <div className="mt-[9px] mr-[14px] flex justify-end gap-[1px]">
        <span className="flex h-[13px] w-[38px] items-center justify-center border border-[#ccc] bg-[#f0f0f0]"><u>O</u>K</span>
        <span className="flex h-[13px] w-[37px] items-center justify-center border border-[#ccc] bg-[#f0f0f0]"><u>C</u>ancel</span>
      </div>
      <svg viewBox="0 0 8 12" className="absolute top-[184px] left-[171.500px] h-[11px] w-[7px]">
        <path d="M1 1v9l2-2 1.500 3.500 1.500-.7L4.500 7.500H7z" fill="#fff" stroke="#777" strokeWidth=".7" />
      </svg>
    </div>
  )
}

/* ---------- Output ---------- */

function OutputDock() {
  return (
    <div className="flex h-[90px] shrink-0 flex-col border-t border-[#d5d5d5] bg-[#f8f8f8] text-[5.500px] text-[#4a4a4a]">
      <div className="mt-[3px] flex h-[15px] shrink-0 items-center pt-[2px] pr-[6px] pl-[4px] text-[6.750px]">
        <span className="flex-1 pt-px">Output</span>
        <Pin className="mr-[11px] size-[5px] fill-[#888] text-[#888]" />
        <X className="size-[6px] text-[#888]" />
      </div>
      <div className="flex h-[16px] shrink-0 items-center bg-[#efefef] pl-[3px] whitespace-nowrap">
        <Icon name="paste" />
        <Icon name="clear" className="ml-[5px] size-[7px]" />
        <Icon name="unlock" className="ml-[6px] size-[8px]" />
        <span className="ml-[4px] flex h-[13px] w-[33px] items-center justify-center bg-[#cbcbcb] text-[#444]">Command</span>
        <span className="ml-[5px] w-[29.500px]">Rotation</span>
        <span className="w-[36px]">Coordinate</span>
        <span className="w-[50.500px]">Relative rotation</span>
        <span className="w-[57px]">Relative coordinate</span>
        <span className="w-[58px]">Set working plane Z:</span>
        <span className="flex h-[10px] w-[52px] items-center justify-end border border-[#ccc] bg-white">
          <span className="mr-[5px]">0.0</span>
          <Spin />
        </span>
      </div>
      <div className="flex h-[11px] shrink-0 items-center">
        <span className="w-[37px] pt-px pl-[10px] text-[5.200px]">Command:</span>
        <span className="h-[11px] flex-1 border border-[#aaa] bg-white" />
        <span className="w-[2px]" />
      </div>
      <div className="flex min-h-0 flex-1 bg-[#fdfdfd] pr-[3px] pb-[2px]">
        <div className="mt-[2px] h-[7px] flex-1 overflow-hidden pl-[2px]">
          <div className="-mt-[3px] text-[5.400px] leading-[8px]">Executed command ID=&apos;CID_MODEL_COPY&apos; with Shortcut=&apos;Ctrl+C&apos;</div>
        </div>
        <div className="mt-[4px] flex w-[8px] flex-col items-center bg-[#f0f0f0]">
          <span className="flex size-[8px] shrink-0 items-center justify-center border border-[#bbb] bg-white"><ChevronUp className="size-[4px]" /></span>
          <span className="mt-auto h-[9px] w-[8px] shrink-0 border border-[#bbb] bg-white" />
          <span className="flex size-[8px] shrink-0 items-center justify-center border border-[#bbb] bg-white"><ChevronDown className="size-[4px]" /></span>
        </div>
      </div>
    </div>
  )
}

/* ---------- Properties ---------- */

type Prop = { label: string; value?: string; kind?: 'head' | 'check' | 'checked' | 'right' | 'drop' | 'sel' | 'expand' | 'pen' }

const fixedProps: Prop[] = [
  { label: 'Selected Entities', value: '4', kind: 'sel' },
  { label: 'Fixed Properties', kind: 'head' },
  { label: 'Type Name', value: 'POLYLINE' },
  { label: 'Layer', value: '0' },
  { label: 'Minimum(xyz)', value: '(-4.432 ; -2.077 ; 0...' },
  { label: 'Maximum(xyz)', value: '(4.036 ; 1.125 ; 0.00' },
  { label: 'Delta(xyz)', value: '(8.469 ; 3.202 ; 0.00' },
  { label: 'Volume', value: '0.0' },
  { label: 'Vertex Count', value: '8' },
  { label: 'Area', value: '0.0' },
  { label: 'Length', value: '33.875' },
  { label: 'Attributes (0)', kind: 'head' },
  { label: 'Variable Properties', kind: 'head' },
]

const variableProps: Prop[] = [
  { label: 'Arrow Size', value: '3', kind: 'right' },
  { label: 'Color Mode', value: 'NONE', kind: 'drop' },
  { label: 'Closed', kind: 'check' },
  { label: 'Clockwise', kind: 'check' },
  { label: 'Hatch Proper', kind: 'expand' },
  { label: 'Line Type', value: 'BYLAYER' },
  { label: 'Line Type Sc...', value: '1', kind: 'right' },
  { label: 'Line Weight', value: 'LW_BYLAYER', kind: 'drop' },
  { label: 'Nodes Size', value: '-1', kind: 'right' },
  { label: 'Nodes Show', kind: 'check' },
  { label: 'Nodes At En...', kind: 'check' },
  { label: 'Pen Color', value: '6', kind: 'pen' },
  { label: 'Pen Width', value: '0', kind: 'right' },
  { label: 'Show Directi...', kind: 'check' },
  { label: 'Align Directio...', kind: 'checked' },
  { label: 'Show Directi...', kind: 'check' },
  { label: 'Tool Tip' },
  { label: 'URL' },
  { label: 'Overlay Type', value: 'NONE', kind: 'drop' },
]

function PropRow({ label, value, kind, height }: Prop & { height: string }) {
  if (kind === 'head') {
    return (
      <div className={`flex items-center border-b border-[#e3e3e3] bg-[#f8f8f8] pr-[2px] pl-[11px] text-[5.400px] font-bold text-[#444] ${height}`}>
        <span className="flex-1">{label}</span>
        {!label.startsWith('Attr') && <ChevronUp className="size-[8px] text-[#777]" strokeWidth={1.5} />}
      </div>
    )
  }
  const sel = kind === 'sel'
  return (
    <div className={`flex whitespace-nowrap ${height}`}>
      <span className={`shrink-0 border-r border-[#e3e3e3] bg-[#f5f5f5] ${sel ? 'w-px' : 'w-[9px]'}`} />
      <span className={`flex shrink-0 items-center border-r border-b border-[#e3e3e3] ${sel ? 'w-[58px] bg-[#e6e6e6] pl-[10px]' : 'w-[50px]'}`}>
        {!sel && <span className="w-[12.500px] shrink-0 pl-[5px] text-[6px]">{kind === 'expand' ? '›' : ''}</span>}
        {label}
      </span>
      <span className="flex min-w-0 flex-1 items-center border-b border-[#e3e3e3] pr-[1.500px] pl-[2px]">
        {(kind === 'check' || kind === 'checked') && (
          <span className="mx-auto flex size-[7px] items-center justify-center border border-[#ccc] bg-white text-[5px]">{kind === 'checked' ? '✓' : ''}</span>
        )}
        {kind === 'pen' && <span className="mr-[2px] h-[5px] w-[6px] border border-[#777]" />}
        <span className={kind === 'right' || kind === 'drop' || sel ? 'ml-auto' : ''}>{value}</span>
        {(kind === 'drop' || label === 'Line Type') && <Chev className={kind === 'drop' ? 'ml-[3px]' : 'ml-auto'} />}
      </span>
    </div>
  )
}

function PropertiesDock() {
  return (
    <div className="flex w-[123px] shrink-0 flex-col border-l border-[#ddd] bg-[#f8f8f8] pl-px text-[5.150px] text-[#4a4a4a]">
      <div className="flex h-[20px] shrink-0 items-center pt-[1px] pr-[5.500px] pl-[4px] text-[6.750px]">
        <span className="flex-1 pt-px">Properties</span>
        <span className="flex size-[8px] items-center justify-center rounded-full border border-[#a9bcc9] text-[6px] font-bold text-[#333]">?</span>
        <Pin className="mx-[11px] size-[5px] fill-[#888] text-[#888]" />
        <X className="size-[6px] text-[#888]" />
      </div>
      <div className="h-[590px] shrink-0 border border-[#ccc] border-r-[#e2e2e2] bg-[#fdfdfd]">
        {fixedProps.map((p) => <PropRow key={p.label} {...p} height="h-[9.800px]" />)}
        {variableProps.map((p, i) => <PropRow key={i} {...p} height="h-[9.220px]" />)}
      </div>
      <div className="flex h-[14px] items-center text-[5.300px] whitespace-nowrap">
        <span className="flex h-full w-[34px] items-center border-r border-[#ddd] pt-px pl-[5px] text-[#4384ad]">Properties</span>
        <span className="flex h-[8px] w-[40px] items-center border-r border-[#ddd] pt-px pl-[5px]">Process Map</span>
      </div>
    </div>
  )
}

/* ---------- Status bar ---------- */

function StatusBar() {
  return (
    <div className="flex h-[13px] shrink-0 items-center bg-[#efefef] pt-[2px] text-[5.350px] whitespace-nowrap text-[#4a4a4a]">
      <span className="w-[140px] pl-[97px]">X: 0.000</span>
      <span className="w-[43px]">Y: 0.000</span>
      <span className="w-[113.500px]">Z: 0.000</span>
      <span className="w-[112px]">Working Azimuth: 0.0 Dip: 0.0</span>
      <span className="w-[98px]">View Azimuth: 0.0 Dip: 0.0</span>
      <span className="flex h-[11px] w-[26px] items-center justify-center bg-[#c6c6c6]">ORTHO</span>
      <span className="ml-[4px] w-[24px]">POLAR</span>
      <Icon name="restore" />
      <span className="ml-[1.500px] w-[39px]">Restore Layout</span>
      <Chev />
    </div>
  )
}

export default function App() {
  return (
    <div className="flex h-[720px] w-[1280px] flex-col overflow-hidden border-x border-black bg-[#f0f0f0] font-['Open_Sans','Noto_Sans',sans-serif] leading-none [text-rendering:geometricPrecision]">
      <TitleBar />
      <RibbonTabs />
      <Ribbon />
      <div className="flex h-[624px] shrink-0">
        <LayerDock />
        <div className="ml-px flex w-[1021px] shrink-0 flex-col">
          <div className="flex h-[11px] shrink-0 items-end bg-[#fafafa] text-[5.300px] text-[#4a4a4a]">
            <span className="flex h-[11px] w-[46px] items-center justify-between border-r border-[#ddd] bg-[#f5f5f5] pr-[3px] pl-[2px] whitespace-nowrap">
              Document 1 <X className="size-[4px] text-[#888]" />
            </span>
          </div>
          <Canvas />
          <div className="flex h-[12px] shrink-0 items-center bg-[#f9f9f9] text-[5.100px] text-[#444]">
            <span className="flex h-full w-[34px] items-center border-r border-[#ddd] pt-px pl-[4px]">
              <Icon name="model" className="mr-[1px] size-[8px]" />
              MODEL
            </span>
            <span className="flex h-full w-[13px] items-center justify-center border-r border-[#ddd]">
              <Plus className="size-[8px] text-[#444]" />
            </span>
          </div>
          <OutputDock />
        </div>
        <div className="w-[1px] shrink-0" />
        <PropertiesDock />
      </div>
      <StatusBar />
    </div>
  )
}
